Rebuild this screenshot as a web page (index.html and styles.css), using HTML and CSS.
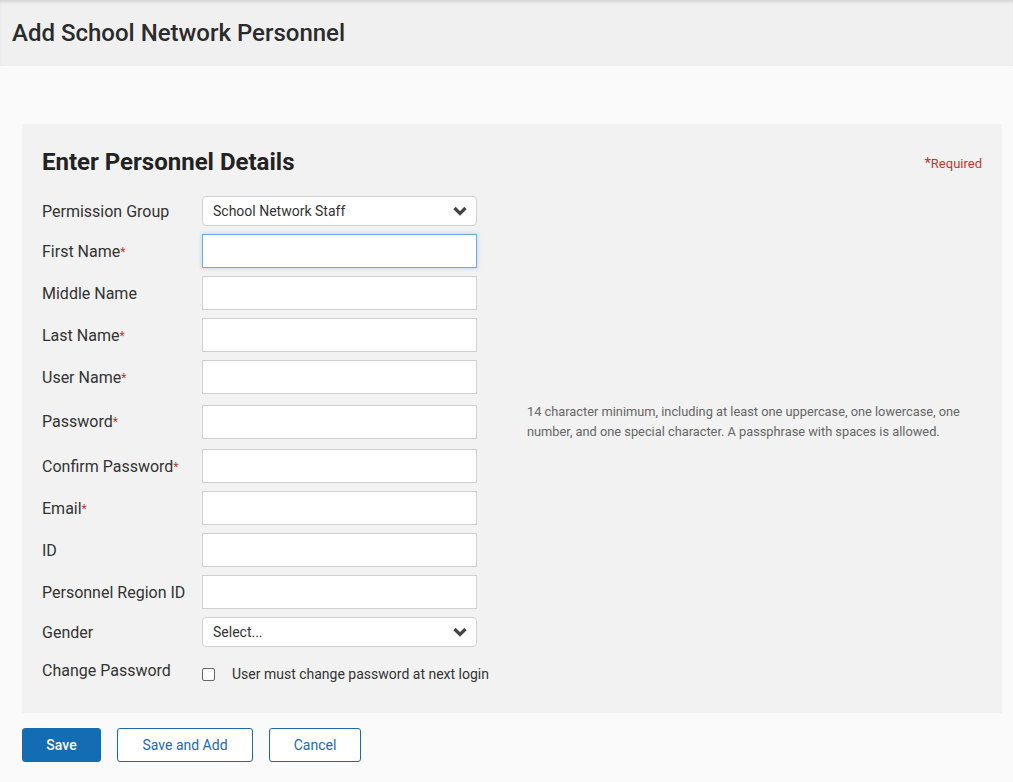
FILE: index.html
```html
<!DOCTYPE html>
<html lang="en">
<head>
<meta charset="utf-8">
<title>Add School Network Personnel</title>
<link rel="stylesheet" href="styles.css">
</head>
<body>
<header class="page-header">
  <h1 class="page-title">Add School Network Personnel</h1>
</header>
<main class="content">
  <section class="panel">
    <div class="panel-head">
      <h2 class="panel-title">Enter Personnel Details</h2>
      <span class="required-note"><span class="star">*</span>Required</span>
    </div>
    <div class="form">
      <div class="row row-select">
        <label class="label">Permission Group</label>
        <div class="select">
          <span>School Network Staff</span>
          <svg class="chev" width="14" height="10" viewBox="0 0 14 10"><path d="M1.5 2 L7 7.5 L12.5 2" fill="none" stroke="#444" stroke-width="3.2"/></svg>
        </div>
      </div>
      <div class="row">
        <label class="label">First Name<span class="req">*</span></label>
        <input class="input focused" type="text">
      </div>
      <div class="row">
        <label class="label">Middle Name</label>
        <input class="input" type="text">
      </div>
      <div class="row">
        <label class="label">Last Name<span class="req">*</span></label>
        <input class="input" type="text">
      </div>
      <div class="row">
        <label class="label">User Name<span class="req">*</span></label>
        <input class="input" type="text">
      </div>
      <div class="row">
        <label class="label">Password<span class="req">*</span></label>
        <input class="input" type="password">
        <p class="hint">14 character minimum, including at least one uppercase, one lowercase, one number, and one special character. A passphrase with spaces is allowed.</p>
      </div>
      <div class="row">
        <label class="label">Confirm Password<span class="req">*</span></label>
        <input class="input" type="password">
      </div>
      <div class="row">
        <label class="label">Email<span class="req">*</span></label>
        <input class="input" type="text">
      </div>
      <div class="row">
        <label class="label">ID</label>
        <input class="input" type="text">
      </div>
      <div class="row">
        <label class="label">Personnel Region ID</label>
        <input class="input" type="text">
      </div>
      <div class="row row-select">
        <label class="label">Gender</label>
        <div class="select">
          <span>Select...</span>
          <svg class="chev" width="14" height="10" viewBox="0 0 14 10"><path d="M1.5 2 L7 7.5 L12.5 2" fill="none" stroke="#444" stroke-width="3.2"/></svg>
        </div>
      </div>
      <div class="row row-check">
        <label class="label">Change Password</label>
        <label class="check">
          <span class="box"></span>
          <span>User must change password at next login</span>
        </label>
      </div>
    </div>
  </section>
  <div class="actions">
    <button class="btn btn-primary">Save</button>
    <button class="btn btn-secondary btn-wide">Save and Add</button>
    <button class="btn btn-secondary btn-cancel">Cancel</button>
  </div>
</main>
</body>
</html>
```

FILE: styles.css
```css
* { box-sizing: border-box; }
html, body { margin: 0; padding: 0; }
body {
  font-family: Roboto, "Liberation Sans", sans-serif;
  color: #333;
  background: #fafafa;
  width: 1013px;
  height: 782px;
  overflow: hidden;
}
.page-header {
  height: 66px;
  background: #f0f0f0;
  box-shadow: inset 0 3px 3px -1px rgba(0,0,0,0.12);
  padding: 17px 12px 0;
}
.page-title {
  margin: 0;
  font-size: 24px;
  font-weight: 500;
  color: #2b2b2b;
  line-height: 32px;
}
.content {
  padding: 58px 11px 0 22px;
}
.panel {
  background: #f2f2f2;
  padding: 22px 20px 28px;
  height: 589px;
}
.panel-head {
  display: flex;
  justify-content: space-between;
  align-items: flex-start;
  margin-bottom: 18px;
}
.panel-title {
  margin: 0;
  font-size: 24px;
  font-weight: 700;
  color: #222;
  line-height: 32px;
}
.required-note {
  font-size: 13px;
  color: #c0392b;
  padding-top: 8px;
}
.required-note .star { font-size: 15px; }
.form { display: flex; flex-direction: column; gap: 8px; }
.row {
  display: flex;
  align-items: center;
  min-height: 34px;
}
.row-select { min-height: 30px; }
.label {
  width: 160px;
  flex: 0 0 160px;
  font-size: 16px;
  color: #333;
}
.req { color: #c0392b; font-size: 12px; vertical-align: 1px; }
.input {
  width: 275px;
  height: 34px;
  border: 1px solid #cfcfcf;
  background: #fff;
  border-radius: 0;
  margin: 0;
  padding: 0 10px;
  font: inherit;
}
.input.focused {
  border-color: #6aaee8;
  box-shadow: 0 0 4px rgba(106,174,232,0.5);
}
.select {
  width: 275px;
  height: 30px;
  background: #fff;
  border: 1px solid #d0d0d0;
  border-radius: 4px;
  display: flex;
  align-items: center;
  justify-content: space-between;
  padding: 0 9px 0 10px;
  font-size: 14px;
  color: #333;
}
.chev { display: block; }
.hint {
  margin: 0 0 0 50px;
  font-size: 12.8px;
  line-height: 19.5px;
  color: #666;
  width: 450px;
}
.row-check { align-items: flex-start; margin-top: 6px; }
.row-check .label { line-height: 20px; }
.check {
  display: flex;
  align-items: center;
  font-size: 14px;
  color: #333;
  margin-top: 5px;
  gap: 17px;
}
.box {
  width: 13px;
  height: 13px;
  border: 1px solid #666;
  border-radius: 2px;
  background: #fff;
}
.actions {
  display: flex;
  gap: 16px;
  padding-top: 15px;
}
.btn {
  height: 34px;
  font-family: Roboto, "Liberation Sans", sans-serif;
  font-size: 14px;
  border-radius: 3px;
  padding: 0;
  cursor: pointer;
}
.btn-primary {
  width: 79px;
  background: #146db3;
  border: 1px solid #146db3;
  color: #fff;
  font-weight: 500;
}
.btn-secondary {
  background: #fff;
  border: 1px solid #1b6aad;
  color: #1b6aad;
}
.btn-wide { width: 136px; }
.btn-cancel { width: 92px; }
```
